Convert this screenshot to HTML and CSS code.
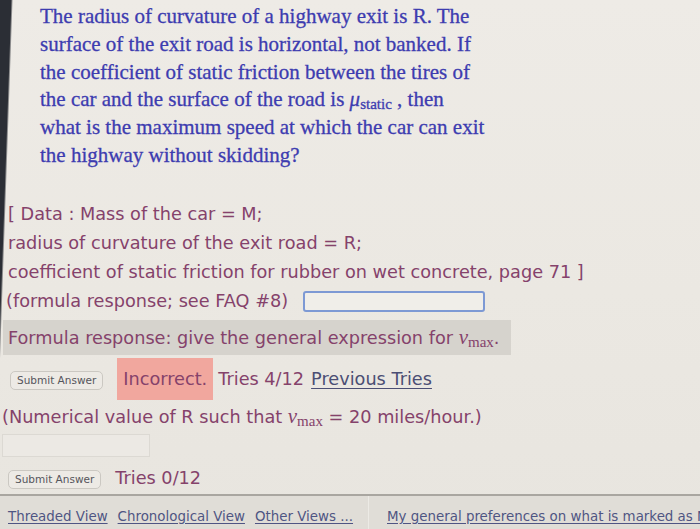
FILE: index.html
```html
<!DOCTYPE html>
<html lang="en">
<head>
<meta charset="utf-8">
<title>Highway exit problem</title>
<link rel="stylesheet" href="styles.css">
</head>
<body>
<div class="screen">
  <p class="problem">The radius of curvature of a highway exit is R. The<br>surface of the exit road is horizontal, not banked. If<br>the coefficient of static friction between the tires of<br>the car and the surface of the road is <i class="sym">μ</i><sub class="sub">static</sub> , then<br>what is the maximum speed at which the car can exit<br>the highway without skidding?</p>

  <div class="data">
    <div class="line">[ Data : Mass of the car = M;</div>
    <div class="line">radius of curvature of the exit road = R;</div>
    <div class="line">coefficient of static friction for rubber on wet concrete, page 71 ]</div>
    <div class="line narrow">(formula response; see FAQ #8) <span class="formula-input"></span></div>
    <div class="hint">Formula response: give the general expression for <i class="var">v</i><sub class="vsub">max</sub>.</div>
    <div class="submit-row first">
      <span class="btn">Submit Answer</span>
      <span class="incorrect">Incorrect.</span>
      <span class="tries">Tries 4/12</span>
      <a class="prev" href="#">Previous Tries</a>
    </div>
    <div class="line numeric">(Numerical value of R such that <i class="var">v</i><sub class="vsub">max</sub> = 20 miles/hour.)</div>
    <div class="num-input"></div>
    <div class="submit-row second">
      <span class="btn">Submit Answer</span>
      <span class="tries">Tries 0/12</span>
    </div>
  </div>

  <div class="footer">
    <div class="views">
      <a href="#">Threaded View</a>
      <a href="#">Chronological View</a>
      <a href="#">Other Views ...</a>
    </div>
    <div class="prefs">
      <a href="#">My general preferences on what is marked as NEW</a>
    </div>
  </div>
</div>
</body>
</html>
```

FILE: styles.css
```css
html, body {
  margin: 0;
  padding: 0;
}

body {
  background: #ebe8e2;
}

.screen {
  width: 700px;
  height: 529px;
  overflow: hidden;
  background:
    linear-gradient(92deg, #2b2e35 11px, rgba(43, 46, 53, 0) 13px),
    linear-gradient(180deg, #eeebe6 0%, #ebe8e2 55%, #e8e5df 100%);
  font-family: "DejaVu Sans", Verdana, sans-serif;
  color: #85426b;
  display: flex;
  flex-direction: column;
}

.problem {
  margin: 0;
  padding: 3px 0 0 40px;
  font-family: "Liberation Serif", "Times New Roman", serif;
  font-size: 21px;
  line-height: 27.8px;
  color: #3d3cb0;
  -webkit-text-stroke: 0.3px #3d3cb0;
}

.sym {
  font-style: italic;
  font-size: 21px;
}

.sub {
  font-size: 15px;
  vertical-align: -3px;
  line-height: 0;
}

.data {
  margin-top: 30px;
  font-size: 17.7px;
}

.line {
  line-height: 29px;
  padding-left: 8px;
  white-space: nowrap;
}

.narrow {
  padding-left: 6px;
}

.formula-input {
  display: inline-block;
  vertical-align: middle;
  width: 178px;
  height: 17px;
  margin-left: 9px;
  border: 2px solid #7d99d4;
  border-radius: 3px;
  background: #f0eee9;
}

.hint {
  display: inline-block;
  margin: 4px 0 0 3px;
  padding: 3px 12px 3px 5px;
  line-height: 28px;
  background: #d6d3cd;
  white-space: nowrap;
}

.var {
  font-family: "Liberation Serif", "Times New Roman", serif;
  font-size: 21px;
}

.vsub {
  font-family: "Liberation Serif", "Times New Roman", serif;
  font-size: 15px;
  vertical-align: -3px;
  line-height: 0;
}

.submit-row {
  display: flex;
  align-items: center;
  white-space: nowrap;
}

.submit-row.first {
  margin-top: 3px;
  height: 42px;
}

.btn {
  display: inline-block;
  box-sizing: border-box;
  height: 19px;
  line-height: 17px;
  padding: 0 6px;
  border: 1px solid #cbc8c2;
  border-radius: 5px;
  background: #edeae5;
  color: #55555c;
  font-size: 10.5px;
}

.first .btn {
  margin-left: 10px;
  margin-top: 4px;
}

.incorrect {
  margin-left: 14px;
  padding: 0 6px;
  line-height: 42px;
  background: #f1a79e;
}

.tries {
  margin-left: 5px;
}

.prev {
  margin-left: 7px;
  color: #4b4e74;
  text-decoration: underline;
  text-decoration-thickness: 1px;
  text-underline-offset: 3px;
}

.numeric {
  margin-top: 2px;
  padding-left: 2px;
}

.num-input {
  width: 146px;
  height: 21px;
  margin: 2px 0 0 2px;
  border: 1px solid #dcd9d3;
  background: #ece9e4;
}

.submit-row.second {
  margin-top: 10px;
  height: 22px;
}

.second .btn {
  margin-left: 8px;
  margin-top: 3px;
}

.second .tries {
  margin-left: 14px;
}

.footer {
  margin-top: 5px;
  border-top: 2px solid #a9a6a0;
  background: #e0ddd7;
  flex: 1;
  display: flex;
  font-size: 13.4px;
  line-height: 18px;
  white-space: nowrap;
}

.footer a {
  color: #4f5583;
  text-decoration: underline;
  text-underline-offset: 2px;
}

.views {
  display: flex;
  flex-shrink: 0;
  gap: 10px;
  padding: 12px 0 0 8px;
  width: 369px;
  box-sizing: border-box;
  border-right: 1px solid #eceae5;
}

.prefs {
  flex-shrink: 0;
  padding: 12px 0 0 18px;
}
```
